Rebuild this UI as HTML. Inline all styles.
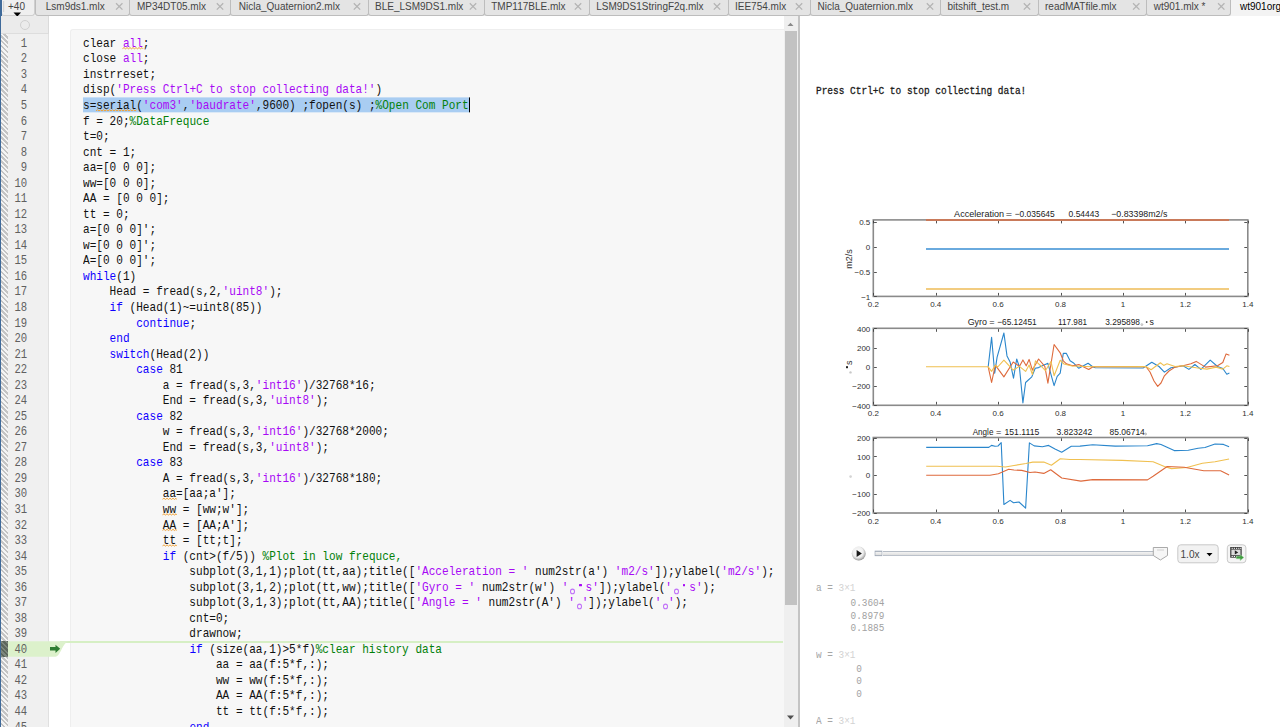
<!DOCTYPE html>
<html><head><meta charset="utf-8">
<style>
*{margin:0;padding:0;box-sizing:border-box}
html,body{width:1280px;height:727px;overflow:hidden;background:#fff;position:relative;font-family:"Liberation Sans",sans-serif}
#tabbar{position:absolute;left:0;top:0;width:1280px;height:16px;background:#f3f3f3}
.tab{position:absolute;top:-2px;height:18px;background:#e4e4e4;border:1px solid #bdbdbd;border-top:none;border-radius:0 0 3px 3px}
.tab.plus{background:#efefef;border-color:#cfcfcf}
.tt{position:absolute;top:1px;font-size:10px;line-height:12px;color:#444;white-space:nowrap}
#leftstrip{position:absolute;left:0;top:0;width:1.5px;height:727px;background:#3f6a9a}
#gutter{position:absolute;left:1px;top:16px;width:48px;height:711px;background:#f0f0f0;border-right:1px solid #e0e0e0}
#guttop{position:absolute;left:1px;top:16px;width:48px;height:18px;background:#ebebeb;border-bottom:1px solid #dddddd;border-right:1px solid #dadada}
#circ{position:absolute;left:20px;top:19.5px;width:10px;height:10px;border:1px solid #d0d0d0;border-radius:50%}
#hatch{position:absolute;left:1px;top:34px;width:7px;height:693px;background:repeating-linear-gradient(45deg,#f4f4f4 0 1.6px,#c4c4c4 1.6px 3.4px)}
.gn{position:absolute;left:-0.8px;width:28px;text-align:right;font-family:"Liberation Mono",monospace;font-size:10.6px;color:#606060;height:15.54px;line-height:15.54px;transform:translateY(-0.2px) scaleY(1.22);transform-origin:0 10.6px}
#editor{position:absolute;left:49px;top:16px;width:735px;height:711px;background:#fff}
#cell{position:absolute;left:70px;top:29px;width:714px;height:698px;background:#f7f7f7;border-top:1px solid #eeeeee;border-left:1px solid #eeeeee;border-radius:3px 0 0 0}
.ln{position:absolute;left:83px;white-space:pre;font-family:"Liberation Mono",monospace;font-size:11.092px;height:15.540px;line-height:15.540px;color:#111;transform:scaleY(1.15);transform-origin:0 10.7px}
.k{color:#0e00ff}
.s{color:#a709f5}
.c{color:#028009}
.w{text-decoration:underline wavy #e8a040;text-decoration-thickness:1px;text-underline-offset:1.5px}
.sel{background:#a9cdf2;box-shadow:0 -1px 0 #a9cdf2}
.jc{display:inline-block;width:6.655px;height:10px;position:relative}
.jc::after{content:"";position:absolute;left:2px;top:7.5px;width:3px;height:3px;border:0.9px solid #c070f8;border-radius:50%}
.jd{display:inline-block;width:10.6px;height:10px;position:relative}
.jd::after{content:"";position:absolute;left:4.5px;top:4px;width:2.2px;height:2.2px;background:#a709f5;border-radius:0.5px}
.caret{display:inline-block;width:1px;height:13px;background:#000;vertical-align:-3px}
#scroll{position:absolute;left:784px;top:16px;width:14px;height:711px;background:#efefef}
#thumb{position:absolute;left:785px;top:31px;width:12px;height:574px;background:#c2c2c2}
#divider{position:absolute;left:798px;top:16px;width:1.5px;height:711px;background:#c4c4c4}
#out{position:absolute;left:800px;top:16px;width:480px;height:711px;background:#fff}
.mono{position:absolute;font-family:"Liberation Mono",monospace;white-space:pre}
svg{position:absolute;left:0;top:0}
.tl{font-family:"Liberation Sans",sans-serif;font-size:8px;fill:#303030}
.tit{font-family:"Liberation Sans",sans-serif;font-size:9px;fill:#1a1a1a}
#l40bar{position:absolute;left:1px;top:641.3px;width:7px;height:15.5px;background:repeating-linear-gradient(45deg,#7d877d 0 1.6px,#5c665c 1.6px 3.4px)}
#l40line{position:absolute;left:60px;top:641.3px;width:723px;height:1.6px;background:#d6efc4}
.vn{position:absolute;font-family:"Liberation Mono",monospace;font-size:9.4px;line-height:12.4px;color:#a2a2a2;white-space:pre;transform:scaleY(1.12);transform-origin:0 9px}
.vh{position:absolute;font-family:"Liberation Mono",monospace;font-size:9.4px;line-height:12px;color:#a6a6a6;white-space:pre;transform:scaleY(1.12);transform-origin:0 9px}
.vh span{color:#d2d2d2}
</style></head><body>
<div id="tabbar"></div>
<div class="tab plus" style="left:1px;width:34px"></div>
<div class="tab" style="left:35px;width:95px"></div>
<div class="tt" style="left:45.75px">Lsm9ds1.mlx</div>
<div class="tab" style="left:129px;width:101.5px"></div>
<div class="tt" style="left:137px">MP34DT05.mlx</div>
<div class="tab" style="left:229.5px;width:139.0px"></div>
<div class="tt" style="left:238.75px">Nicla_Quaternion2.mlx</div>
<div class="tab" style="left:367.5px;width:117.5px"></div>
<div class="tt" style="left:375px">BLE_LSM9DS1.mlx</div>
<div class="tab" style="left:484px;width:106px"></div>
<div class="tt" style="left:491.25px">TMP117BLE.mlx</div>
<div class="tab" style="left:589px;width:139.5px"></div>
<div class="tt" style="left:596.25px">LSM9DS1StringF2q.mlx</div>
<div class="tab" style="left:727.5px;width:83.0px"></div>
<div class="tt" style="left:735px">IEE754.mlx</div>
<div class="tab" style="left:809.5px;width:131.5px"></div>
<div class="tt" style="left:817.5px">Nicla_Quaternion.mlx</div>
<div class="tab" style="left:940px;width:98.5px"></div>
<div class="tt" style="left:947.5px">bitshift_test.m</div>
<div class="tab" style="left:1037.5px;width:109.5px"></div>
<div class="tt" style="left:1045px">readMATfile.mlx</div>
<div class="tab" style="left:1146px;width:84.5px"></div>
<div class="tt" style="left:1153.75px">wt901.mlx *</div>
<div class="tt" style="left:8px">+40</div>
<div class="tt" style="left:1240px;color:#000">wt901org.mlx</div>
<svg width="1280" height="16" style="position:absolute;left:0;top:0"><path d="M116.05,3.2 L122.45,9.6 M122.45,3.2 L116.05,9.6" stroke="#b4b4b4" stroke-width="1.3"/><path d="M216.8,3.2 L223.2,9.6 M223.2,3.2 L216.8,9.6" stroke="#b4b4b4" stroke-width="1.3"/><path d="M353.8,3.2 L360.2,9.6 M360.2,3.2 L353.8,9.6" stroke="#b4b4b4" stroke-width="1.3"/><path d="M469.8,3.2 L476.2,9.6 M476.2,3.2 L469.8,9.6" stroke="#b4b4b4" stroke-width="1.3"/><path d="M574.8,3.2 L581.2,9.6 M581.2,3.2 L574.8,9.6" stroke="#b4b4b4" stroke-width="1.3"/><path d="M713.8,3.2 L720.2,9.6 M720.2,3.2 L713.8,9.6" stroke="#b4b4b4" stroke-width="1.3"/><path d="M795.8,3.2 L802.2,9.6 M802.2,3.2 L795.8,9.6" stroke="#b4b4b4" stroke-width="1.3"/><path d="M926.8,3.2 L933.2,9.6 M933.2,3.2 L926.8,9.6" stroke="#b4b4b4" stroke-width="1.3"/><path d="M1023.8,3.2 L1030.2,9.6 M1030.2,3.2 L1023.8,9.6" stroke="#b4b4b4" stroke-width="1.3"/><path d="M1133.05,3.2 L1139.45,9.6 M1139.45,3.2 L1133.05,9.6" stroke="#b4b4b4" stroke-width="1.3"/><path d="M1218.05,3.2 L1224.45,9.6 M1224.45,3.2 L1218.05,9.6" stroke="#b4b4b4" stroke-width="1.3"/><path d="M13.5,12.5 L21,12.5 L17.25,16.5 Z" fill="#000"/><rect x="3" y="1" width="1.2" height="11" fill="#d4d4d4"/></svg>
<div id="leftstrip"></div>
<div id="gutter"></div>
<div id="guttop"></div>
<div id="circ"></div>
<div id="hatch"></div>
<div id="editor"></div>
<div id="cell"></div>
<div id="l40bar"></div>
<div id="l40line"></div>
<svg width="80" height="727" style="position:absolute;left:0;top:0">
<path d="M8,641.3 L69,641.3 C64,642 62,650 59,654 C58,656 56,656.8 54,656.8 L8,656.8 Z" fill="#dcf1cb"/>
<path d="M50,647 L55.5,647 L55.5,644.7 L60.2,648.8 L55.5,652.9 L55.5,650.6 L50,650.6 Z" fill="#2f7d32"/>
</svg>
<div class="gn" style="top:36.80px">1</div>
<div class="gn" style="top:52.34px">2</div>
<div class="gn" style="top:67.88px">3</div>
<div class="gn" style="top:83.42px">4</div>
<div class="gn" style="top:98.96px">5</div>
<div class="gn" style="top:114.50px">6</div>
<div class="gn" style="top:130.04px">7</div>
<div class="gn" style="top:145.58px">8</div>
<div class="gn" style="top:161.12px">9</div>
<div class="gn" style="top:176.66px">10</div>
<div class="gn" style="top:192.20px">11</div>
<div class="gn" style="top:207.74px">12</div>
<div class="gn" style="top:223.28px">13</div>
<div class="gn" style="top:238.82px">14</div>
<div class="gn" style="top:254.36px">15</div>
<div class="gn" style="top:269.90px">16</div>
<div class="gn" style="top:285.44px">17</div>
<div class="gn" style="top:300.98px">18</div>
<div class="gn" style="top:316.52px">19</div>
<div class="gn" style="top:332.06px">20</div>
<div class="gn" style="top:347.60px">21</div>
<div class="gn" style="top:363.14px">22</div>
<div class="gn" style="top:378.68px">23</div>
<div class="gn" style="top:394.22px">24</div>
<div class="gn" style="top:409.76px">25</div>
<div class="gn" style="top:425.30px">26</div>
<div class="gn" style="top:440.84px">27</div>
<div class="gn" style="top:456.38px">28</div>
<div class="gn" style="top:471.92px">29</div>
<div class="gn" style="top:487.46px">30</div>
<div class="gn" style="top:503.00px">31</div>
<div class="gn" style="top:518.54px">32</div>
<div class="gn" style="top:534.08px">33</div>
<div class="gn" style="top:549.62px">34</div>
<div class="gn" style="top:565.16px">35</div>
<div class="gn" style="top:580.70px">36</div>
<div class="gn" style="top:596.24px">37</div>
<div class="gn" style="top:611.78px">38</div>
<div class="gn" style="top:627.32px">39</div>
<div class="gn" style="top:642.86px">40</div>
<div class="gn" style="top:658.40px">41</div>
<div class="gn" style="top:673.94px">42</div>
<div class="gn" style="top:689.48px">43</div>
<div class="gn" style="top:705.02px">44</div>
<div class="gn" style="top:720.56px">45</div>
<div class="ln" style="top:36.80px">clear <span class="s">all</span>;</div>
<div class="ln" style="top:52.34px">close <span class="s">all</span>;</div>
<div class="ln" style="top:67.88px">instrreset;</div>
<div class="ln" style="top:83.42px">disp(<span class="s">&#x27;Press Ctrl+C to stop collecting data!&#x27;</span>)</div>
<div class="ln" style="top:98.96px"><span class="sel">s=serial(<span class="s">&#x27;com3&#x27;</span>,<span class="s">&#x27;baudrate&#x27;</span>,9600) ;fopen(s) ;<span class="c">%Open Com Port</span></span><span class="caret"></span></div>
<div class="ln" style="top:114.50px">f = 20;<span class="c">%DataFrequce</span></div>
<div class="ln" style="top:130.04px">t=0;</div>
<div class="ln" style="top:145.58px">cnt = 1;</div>
<div class="ln" style="top:161.12px">aa=[0 0 0];</div>
<div class="ln" style="top:176.66px">ww=[0 0 0];</div>
<div class="ln" style="top:192.20px">AA = [0 0 0];</div>
<div class="ln" style="top:207.74px">tt = 0;</div>
<div class="ln" style="top:223.28px">a=[0 0 0]&#x27;;</div>
<div class="ln" style="top:238.82px">w=[0 0 0]&#x27;;</div>
<div class="ln" style="top:254.36px">A=[0 0 0]&#x27;;</div>
<div class="ln" style="top:269.90px"><span class="k">while</span>(1)</div>
<div class="ln" style="top:285.44px">    Head = fread(s,2,<span class="s">&#x27;uint8&#x27;</span>);</div>
<div class="ln" style="top:300.98px">    <span class="k">if</span> (Head(1)~=uint8(85))</div>
<div class="ln" style="top:316.52px">        <span class="k">continue</span>;</div>
<div class="ln" style="top:332.06px">    <span class="k">end</span></div>
<div class="ln" style="top:347.60px">    <span class="k">switch</span>(Head(2))</div>
<div class="ln" style="top:363.14px">        <span class="k">case</span> 81</div>
<div class="ln" style="top:378.68px">            a = fread(s,3,<span class="s">&#x27;int16&#x27;</span>)/32768*16;</div>
<div class="ln" style="top:394.22px">            End = fread(s,3,<span class="s">&#x27;uint8&#x27;</span>);</div>
<div class="ln" style="top:409.76px">        <span class="k">case</span> 82</div>
<div class="ln" style="top:425.30px">            w = fread(s,3,<span class="s">&#x27;int16&#x27;</span>)/32768*2000;</div>
<div class="ln" style="top:440.84px">            End = fread(s,3,<span class="s">&#x27;uint8&#x27;</span>);</div>
<div class="ln" style="top:456.38px">        <span class="k">case</span> 83</div>
<div class="ln" style="top:471.92px">            A = fread(s,3,<span class="s">&#x27;int16&#x27;</span>)/32768*180;</div>
<div class="ln" style="top:487.46px">            aa=[aa;a&#x27;];</div>
<div class="ln" style="top:503.00px">            ww = [ww;w&#x27;];</div>
<div class="ln" style="top:518.54px">            AA = [AA;A&#x27;];</div>
<div class="ln" style="top:534.08px">            tt = [tt;t];</div>
<div class="ln" style="top:549.62px">            <span class="k">if</span> (cnt&gt;(f/5)) <span class="c">%Plot in low frequce,</span></div>
<div class="ln" style="top:565.16px">                subplot(3,1,1);plot(tt,aa);title([<span class="s">&#x27;Acceleration = &#x27;</span> num2str(a&#x27;) <span class="s">&#x27;m2/s&#x27;</span>]);ylabel(<span class="s">&#x27;m2/s&#x27;</span>);</div>
<div class="ln" style="top:580.70px">                subplot(3,1,2);plot(tt,ww);title([<span class="s">&#x27;Gyro = &#x27;</span> num2str(w&#x27;) <span class="s">'<span class="jc"></span><span class="jd"></span>s'</span>]);ylabel(<span class="s">'<span class="jc"></span><span class="jd"></span>s'</span>);</div>
<div class="ln" style="top:596.24px">                subplot(3,1,3);plot(tt,AA);title([<span class="s">&#x27;Angle = &#x27;</span> num2str(A&#x27;) <span class="s">'<span class="jc"></span>'</span>]);ylabel(<span class="s">'<span class="jc"></span>'</span>);</div>
<div class="ln" style="top:611.78px">                cnt=0;</div>
<div class="ln" style="top:627.32px">                drawnow;</div>
<div class="ln" style="top:642.86px">                <span class="k">if</span> (size(aa,1)&gt;5*f)<span class="c">%clear history data</span></div>
<div class="ln" style="top:658.40px">                    aa = aa(f:5*f,:);</div>
<div class="ln" style="top:673.94px">                    ww = ww(f:5*f,:);</div>
<div class="ln" style="top:689.48px">                    AA = AA(f:5*f,:);</div>
<div class="ln" style="top:705.02px">                    tt = tt(f:5*f,:);</div>
<div class="ln" style="top:720.56px">                <span class="k">end</span></div>
<div id="scroll"></div>
<div id="thumb"></div>
<svg width="20" height="727" style="position:absolute;left:780px;top:0">
<path d="M7.5,26 L13.5,26 L10.5,22.8 Z" fill="#8a8a8a"/>
<path d="M7,715.5 L14,715.5 L10.5,719.5 Z" fill="#505050"/>
</svg>
<div id="divider"></div>
<div id="out"></div>
<div class="mono" style="left:816px;top:86.3px;font-size:9.47px;line-height:12px;color:#1a1a1a;transform:scaleY(1.15);transform-origin:0 9px;-webkit-text-stroke:0.25px #1a1a1a">Press Ctrl+C to stop collecting data!</div>
<svg width="1280" height="727" viewBox="0 0 1280 727">
<rect x="873.3" y="219.9" width="374.5" height="76.5" fill="#fff" stroke="#8a8a8a" stroke-width="1.6"/>
<line x1="873.5" y1="295.59999999999997" x2="873.5" y2="292.9" stroke="#404040" stroke-width="0.9"/>
<line x1="873.5" y1="220.70000000000002" x2="873.5" y2="223.4" stroke="#404040" stroke-width="0.9"/>
<text x="873.3" y="307.2" class="tl" text-anchor="middle">0.2</text>
<line x1="936.5" y1="295.59999999999997" x2="936.5" y2="292.9" stroke="#404040" stroke-width="0.9"/>
<line x1="936.5" y1="220.70000000000002" x2="936.5" y2="223.4" stroke="#404040" stroke-width="0.9"/>
<text x="935.7" y="307.2" class="tl" text-anchor="middle">0.4</text>
<line x1="998.5" y1="295.59999999999997" x2="998.5" y2="292.9" stroke="#404040" stroke-width="0.9"/>
<line x1="998.5" y1="220.70000000000002" x2="998.5" y2="223.4" stroke="#404040" stroke-width="0.9"/>
<text x="998.1" y="307.2" class="tl" text-anchor="middle">0.6</text>
<line x1="1061.5" y1="295.59999999999997" x2="1061.5" y2="292.9" stroke="#404040" stroke-width="0.9"/>
<line x1="1061.5" y1="220.70000000000002" x2="1061.5" y2="223.4" stroke="#404040" stroke-width="0.9"/>
<text x="1060.5" y="307.2" class="tl" text-anchor="middle">0.8</text>
<line x1="1123.5" y1="295.59999999999997" x2="1123.5" y2="292.9" stroke="#404040" stroke-width="0.9"/>
<line x1="1123.5" y1="220.70000000000002" x2="1123.5" y2="223.4" stroke="#404040" stroke-width="0.9"/>
<text x="1123.0" y="307.2" class="tl" text-anchor="middle">1</text>
<line x1="1185.5" y1="295.59999999999997" x2="1185.5" y2="292.9" stroke="#404040" stroke-width="0.9"/>
<line x1="1185.5" y1="220.70000000000002" x2="1185.5" y2="223.4" stroke="#404040" stroke-width="0.9"/>
<text x="1185.4" y="307.2" class="tl" text-anchor="middle">1.2</text>
<line x1="1248.5" y1="295.59999999999997" x2="1248.5" y2="292.9" stroke="#404040" stroke-width="0.9"/>
<line x1="1248.5" y1="220.70000000000002" x2="1248.5" y2="223.4" stroke="#404040" stroke-width="0.9"/>
<text x="1247.8" y="307.2" class="tl" text-anchor="middle">1.4</text>
<line x1="874.0999999999999" y1="222.5" x2="876.8" y2="222.5" stroke="#404040" stroke-width="0.9"/>
<line x1="1247.0" y1="222.5" x2="1244.3" y2="222.5" stroke="#404040" stroke-width="0.9"/>
<text x="870.3" y="224.79999999999998" class="tl" text-anchor="end">0.5</text>
<line x1="874.0999999999999" y1="247.5" x2="876.8" y2="247.5" stroke="#404040" stroke-width="0.9"/>
<line x1="1247.0" y1="247.5" x2="1244.3" y2="247.5" stroke="#404040" stroke-width="0.9"/>
<text x="870.3" y="250.1" class="tl" text-anchor="end">0</text>
<line x1="874.0999999999999" y1="272.5" x2="876.8" y2="272.5" stroke="#404040" stroke-width="0.9"/>
<line x1="1247.0" y1="272.5" x2="1244.3" y2="272.5" stroke="#404040" stroke-width="0.9"/>
<text x="870.3" y="275.09999999999997" class="tl" text-anchor="end">&#x2212;0.5</text>
<line x1="874.0999999999999" y1="296.5" x2="876.8" y2="296.5" stroke="#404040" stroke-width="0.9"/>
<line x1="1247.0" y1="296.5" x2="1244.3" y2="296.5" stroke="#404040" stroke-width="0.9"/>
<text x="870.3" y="299.59999999999997" class="tl" text-anchor="end">&#x2212;1</text>
<text x="954.1" y="216.6" class="tit" textLength="50.0" lengthAdjust="spacingAndGlyphs">Acceleration</text>
<text x="1005.7" y="216.6" class="tit" textLength="6.3" lengthAdjust="spacingAndGlyphs">=</text>
<text x="1014.7" y="216.6" class="tit" textLength="40.0" lengthAdjust="spacingAndGlyphs">&#x2212;0.035645</text>
<text x="1068.6" y="216.6" class="tit" textLength="30.6" lengthAdjust="spacingAndGlyphs">0.54443</text>
<text x="1111.2" y="216.6" class="tit" textLength="56.2" lengthAdjust="spacingAndGlyphs">&#x2212;0.83398m2/s</text>
<text x="0" y="0" class="tl" style="font-size:9px" text-anchor="middle" transform="translate(852 259) rotate(-90)">m2/s</text>
<line x1="926" y1="220" x2="1229" y2="220" stroke="#c97a5a" stroke-width="1.8"/>
<line x1="926" y1="249" x2="1229" y2="249" stroke="#6aaade" stroke-width="1.8"/>
<line x1="926" y1="289" x2="1229" y2="289" stroke="#f2cc80" stroke-width="1.8"/>
<rect x="873.3" y="328.3" width="374.5" height="77.0" fill="#fff" stroke="#8a8a8a" stroke-width="1.6"/>
<line x1="873.5" y1="404.5" x2="873.5" y2="401.8" stroke="#404040" stroke-width="0.9"/>
<line x1="873.5" y1="329.1" x2="873.5" y2="331.8" stroke="#404040" stroke-width="0.9"/>
<text x="873.3" y="416.1" class="tl" text-anchor="middle">0.2</text>
<line x1="936.5" y1="404.5" x2="936.5" y2="401.8" stroke="#404040" stroke-width="0.9"/>
<line x1="936.5" y1="329.1" x2="936.5" y2="331.8" stroke="#404040" stroke-width="0.9"/>
<text x="935.7" y="416.1" class="tl" text-anchor="middle">0.4</text>
<line x1="998.5" y1="404.5" x2="998.5" y2="401.8" stroke="#404040" stroke-width="0.9"/>
<line x1="998.5" y1="329.1" x2="998.5" y2="331.8" stroke="#404040" stroke-width="0.9"/>
<text x="998.1" y="416.1" class="tl" text-anchor="middle">0.6</text>
<line x1="1061.5" y1="404.5" x2="1061.5" y2="401.8" stroke="#404040" stroke-width="0.9"/>
<line x1="1061.5" y1="329.1" x2="1061.5" y2="331.8" stroke="#404040" stroke-width="0.9"/>
<text x="1060.5" y="416.1" class="tl" text-anchor="middle">0.8</text>
<line x1="1123.5" y1="404.5" x2="1123.5" y2="401.8" stroke="#404040" stroke-width="0.9"/>
<line x1="1123.5" y1="329.1" x2="1123.5" y2="331.8" stroke="#404040" stroke-width="0.9"/>
<text x="1123.0" y="416.1" class="tl" text-anchor="middle">1</text>
<line x1="1185.5" y1="404.5" x2="1185.5" y2="401.8" stroke="#404040" stroke-width="0.9"/>
<line x1="1185.5" y1="329.1" x2="1185.5" y2="331.8" stroke="#404040" stroke-width="0.9"/>
<text x="1185.4" y="416.1" class="tl" text-anchor="middle">1.2</text>
<line x1="1248.5" y1="404.5" x2="1248.5" y2="401.8" stroke="#404040" stroke-width="0.9"/>
<line x1="1248.5" y1="329.1" x2="1248.5" y2="331.8" stroke="#404040" stroke-width="0.9"/>
<text x="1247.8" y="416.1" class="tl" text-anchor="middle">1.4</text>
<line x1="874.0999999999999" y1="328.5" x2="876.8" y2="328.5" stroke="#404040" stroke-width="0.9"/>
<line x1="1247.0" y1="328.5" x2="1244.3" y2="328.5" stroke="#404040" stroke-width="0.9"/>
<text x="870.3" y="331.5" class="tl" text-anchor="end">400</text>
<line x1="874.0999999999999" y1="348.5" x2="876.8" y2="348.5" stroke="#404040" stroke-width="0.9"/>
<line x1="1247.0" y1="348.5" x2="1244.3" y2="348.5" stroke="#404040" stroke-width="0.9"/>
<text x="870.3" y="350.75" class="tl" text-anchor="end">200</text>
<line x1="874.0999999999999" y1="367.5" x2="876.8" y2="367.5" stroke="#404040" stroke-width="0.9"/>
<line x1="1247.0" y1="367.5" x2="1244.3" y2="367.5" stroke="#404040" stroke-width="0.9"/>
<text x="870.3" y="370.0" class="tl" text-anchor="end">0</text>
<line x1="874.0999999999999" y1="386.5" x2="876.8" y2="386.5" stroke="#404040" stroke-width="0.9"/>
<line x1="1247.0" y1="386.5" x2="1244.3" y2="386.5" stroke="#404040" stroke-width="0.9"/>
<text x="870.3" y="389.25" class="tl" text-anchor="end">&#x2212;200</text>
<line x1="874.0999999999999" y1="405.5" x2="876.8" y2="405.5" stroke="#404040" stroke-width="0.9"/>
<line x1="1247.0" y1="405.5" x2="1244.3" y2="405.5" stroke="#404040" stroke-width="0.9"/>
<text x="870.3" y="408.5" class="tl" text-anchor="end">&#x2212;400</text>
<text x="967.7" y="325.1" class="tit" textLength="19.3" lengthAdjust="spacingAndGlyphs">Gyro</text>
<text x="989.2" y="325.1" class="tit" textLength="5.3" lengthAdjust="spacingAndGlyphs">=</text>
<text x="997.2" y="325.1" class="tit" textLength="39.5" lengthAdjust="spacingAndGlyphs">&#x2212;65.12451</text>
<text x="1058.1" y="325.1" class="tit" textLength="28.9" lengthAdjust="spacingAndGlyphs">117.981</text>
<text x="1105.2" y="325.1" class="tit" textLength="34.8" lengthAdjust="spacingAndGlyphs">3.295898</text>
<text x="1149.5" y="325.1" class="tit" textLength="4.4" lengthAdjust="spacingAndGlyphs">s</text>
<text x="0" y="0" class="tl" style="font-size:9px" text-anchor="middle" transform="translate(852 362.7) rotate(-90)">s</text>
<polyline points="988.2,366.8 991.6,337.3 994.7,373.2 997.1,357.1 1003.9,333.0 1007.0,355.9 1010.1,362.0 1013.5,378.2 1016.7,359.0 1019.4,367.0 1022.9,402.9 1025.6,382.5 1031.8,376.9 1035.2,368.3 1038.6,367.6 1047.9,363.3 1054.1,385.6 1057.2,376.3 1060.2,373.2 1063.3,353.4 1066.4,353.4 1070.1,360.8 1073.2,362.7 1078.8,368.3 1088.1,363.3 1093.0,367.0 1095.3,367.8 1143.1,368.0 1151.8,362.2 1159.0,366.5 1164.4,372.1 1171.0,367.8 1183.0,365.8 1188.9,369.4 1194.9,364.5 1200.9,369.4 1210.2,360.1 1217.5,366.5 1222.8,368.5 1226.8,374.2 1229.4,373.1" fill="none" stroke="#2a86cc" stroke-width="1.1" stroke-linejoin="round"/>
<polyline points="988.2,366.8 991.6,382.5 995.3,365.2 1003.9,376.9 1013.2,362.0 1019.4,366.4 1022.9,359.9 1026.2,365.8 1029.1,359.4 1032.4,370.1 1038.6,359.0 1044.8,366.4 1047.9,383.1 1054.1,344.5 1060.2,352.8 1063.3,360.8 1066.4,363.9 1072.6,365.8 1078.8,364.6 1088.7,369.5 1093.0,366.8 1145.8,366.5 1150.0,372.0 1154.0,381.0 1157.7,386.4 1161.0,383.0 1164.4,375.8 1169.0,371.0 1175.0,367.1 1183.0,365.8 1190.9,363.8 1196.2,361.4 1205.5,367.1 1217.5,365.8 1222.8,362.5 1226.1,353.9 1229.4,355.2" fill="none" stroke="#de6a3c" stroke-width="1.1" stroke-linejoin="round"/>
<polyline points="926.0,366.8 988.2,366.8 991.6,371.4 995.3,365.2 997.7,367.0 1003.9,360.2 1013.2,370.1 1019.4,366.4 1025.6,371.4 1029.1,365.0 1032.4,374.5 1035.5,360.8 1042.0,367.0 1045.4,370.7 1051.0,361.5 1054.1,375.7 1060.2,360.2 1064.0,364.0 1072.0,366.0 1093.0,366.8 1145.8,366.5 1151.1,369.8 1160.4,362.8 1163.7,365.4 1167.0,363.8 1175.0,366.5 1183.0,365.8 1196.2,367.8 1206.9,369.1 1216.2,367.1 1222.8,369.1 1226.8,365.8 1229.4,366.5" fill="none" stroke="#f0c050" stroke-width="1.1" stroke-linejoin="round"/>
<circle cx="1141.9" cy="324.6" r="0.9" fill="none" stroke="#999" stroke-width="0.7"/><rect x="1145.9" y="321.3" width="1.5" height="1.5" fill="#222"/>
<rect x="873.3" y="437.5" width="374.5" height="75.5" fill="#fff" stroke="#8a8a8a" stroke-width="1.6"/>
<line x1="873.5" y1="512.2" x2="873.5" y2="509.5" stroke="#404040" stroke-width="0.9"/>
<line x1="873.5" y1="438.3" x2="873.5" y2="441.0" stroke="#404040" stroke-width="0.9"/>
<text x="873.3" y="523.8" class="tl" text-anchor="middle">0.2</text>
<line x1="936.5" y1="512.2" x2="936.5" y2="509.5" stroke="#404040" stroke-width="0.9"/>
<line x1="936.5" y1="438.3" x2="936.5" y2="441.0" stroke="#404040" stroke-width="0.9"/>
<text x="935.7" y="523.8" class="tl" text-anchor="middle">0.4</text>
<line x1="998.5" y1="512.2" x2="998.5" y2="509.5" stroke="#404040" stroke-width="0.9"/>
<line x1="998.5" y1="438.3" x2="998.5" y2="441.0" stroke="#404040" stroke-width="0.9"/>
<text x="998.1" y="523.8" class="tl" text-anchor="middle">0.6</text>
<line x1="1061.5" y1="512.2" x2="1061.5" y2="509.5" stroke="#404040" stroke-width="0.9"/>
<line x1="1061.5" y1="438.3" x2="1061.5" y2="441.0" stroke="#404040" stroke-width="0.9"/>
<text x="1060.5" y="523.8" class="tl" text-anchor="middle">0.8</text>
<line x1="1123.5" y1="512.2" x2="1123.5" y2="509.5" stroke="#404040" stroke-width="0.9"/>
<line x1="1123.5" y1="438.3" x2="1123.5" y2="441.0" stroke="#404040" stroke-width="0.9"/>
<text x="1123.0" y="523.8" class="tl" text-anchor="middle">1</text>
<line x1="1185.5" y1="512.2" x2="1185.5" y2="509.5" stroke="#404040" stroke-width="0.9"/>
<line x1="1185.5" y1="438.3" x2="1185.5" y2="441.0" stroke="#404040" stroke-width="0.9"/>
<text x="1185.4" y="523.8" class="tl" text-anchor="middle">1.2</text>
<line x1="1248.5" y1="512.2" x2="1248.5" y2="509.5" stroke="#404040" stroke-width="0.9"/>
<line x1="1248.5" y1="438.3" x2="1248.5" y2="441.0" stroke="#404040" stroke-width="0.9"/>
<text x="1247.8" y="523.8" class="tl" text-anchor="middle">1.4</text>
<line x1="874.0999999999999" y1="438.5" x2="876.8" y2="438.5" stroke="#404040" stroke-width="0.9"/>
<line x1="1247.0" y1="438.5" x2="1244.3" y2="438.5" stroke="#404040" stroke-width="0.9"/>
<text x="870.3" y="440.7" class="tl" text-anchor="end">200</text>
<line x1="874.0999999999999" y1="456.5" x2="876.8" y2="456.5" stroke="#404040" stroke-width="0.9"/>
<line x1="1247.0" y1="456.5" x2="1244.3" y2="456.5" stroke="#404040" stroke-width="0.9"/>
<text x="870.3" y="459.575" class="tl" text-anchor="end">100</text>
<line x1="874.0999999999999" y1="475.5" x2="876.8" y2="475.5" stroke="#404040" stroke-width="0.9"/>
<line x1="1247.0" y1="475.5" x2="1244.3" y2="475.5" stroke="#404040" stroke-width="0.9"/>
<text x="870.3" y="478.45" class="tl" text-anchor="end">0</text>
<line x1="874.0999999999999" y1="494.5" x2="876.8" y2="494.5" stroke="#404040" stroke-width="0.9"/>
<line x1="1247.0" y1="494.5" x2="1244.3" y2="494.5" stroke="#404040" stroke-width="0.9"/>
<text x="870.3" y="497.325" class="tl" text-anchor="end">&#x2212;100</text>
<line x1="874.0999999999999" y1="513.5" x2="876.8" y2="513.5" stroke="#404040" stroke-width="0.9"/>
<line x1="1247.0" y1="513.5" x2="1244.3" y2="513.5" stroke="#404040" stroke-width="0.9"/>
<text x="870.3" y="516.2" class="tl" text-anchor="end">&#x2212;200</text>
<text x="972.7" y="434.6" class="tit" textLength="20.7" lengthAdjust="spacingAndGlyphs">Angle</text>
<text x="996.1" y="434.6" class="tit" textLength="5.3" lengthAdjust="spacingAndGlyphs">=</text>
<text x="1004.5" y="434.6" class="tit" textLength="34.8" lengthAdjust="spacingAndGlyphs">151.1115</text>
<text x="1056.6" y="434.6" class="tit" textLength="35.7" lengthAdjust="spacingAndGlyphs">3.823242</text>
<text x="1109.5" y="434.6" class="tit" textLength="35.3" lengthAdjust="spacingAndGlyphs">85.06714</text>
<polyline points="926.2,447.4 988.8,447.4 991.5,445.4 995.0,446.3 998.0,446.0 1001.2,442.6 1003.9,504.5 1010.1,500.4 1013.5,502.7 1019.0,502.0 1025.6,508.2 1029.4,442.9 1034.2,445.9 1042.4,446.7 1048.6,445.4 1055.0,449.0 1061.7,452.2 1071.3,446.3 1080.0,446.1 1092.7,444.7 1115.2,446.1 1147.5,445.8 1156.7,443.6 1161.0,444.5 1174.2,450.6 1188.3,450.3 1198.1,448.2 1205.0,447.5 1215.0,444.0 1223.5,444.4 1229.1,446.8" fill="none" stroke="#2a86cc" stroke-width="1.1" stroke-linejoin="round"/>
<polyline points="926.2,466.3 997.0,466.3 1005.3,467.0 1014.0,465.5 1025.9,463.5 1032.8,462.1 1043.8,462.1 1051.4,465.2 1060.3,458.7 1070.0,459.5 1080.0,459.5 1122.2,460.4 1153.1,461.8 1164.4,466.5 1171.4,468.6 1186.9,467.5 1202.4,463.3 1215.0,461.8 1229.1,459.0" fill="none" stroke="#f0c050" stroke-width="1.1" stroke-linejoin="round"/>
<polyline points="926.2,475.2 990.0,475.2 998.4,473.8 1008.7,469.3 1014.0,470.0 1021.8,470.4 1030.0,472.5 1035.0,472.0 1043.8,473.4 1050.7,469.7 1061.7,478.0 1080.9,481.1 1092.7,479.6 1147.5,479.9 1153.1,476.3 1167.2,466.5 1184.1,467.2 1203.8,470.7 1220.6,470.7 1229.1,474.9" fill="none" stroke="#de6a3c" stroke-width="1.1" stroke-linejoin="round"/>
<rect x="846" y="366.2" width="2" height="2" fill="#222"/><circle cx="850.5" cy="372.4" r="1.2" fill="#c8c8c8"/><circle cx="850.6" cy="476.6" r="1.3" fill="#d4d4d4"/>
<circle cx="1145.6" cy="434" r="0.9" fill="none" stroke="#999" stroke-width="0.7"/>
<path d="M122.5,48.6 L124.00,47.6 L125.50,48.800000000000004 L127.00,47.6 L128.50,48.800000000000004 L130.00,47.6 L131.50,48.800000000000004 L133.00,47.6 L134.50,48.800000000000004 L136.00,47.6 L137.50,48.800000000000004 L139.00,47.6 L140.50,48.800000000000004 L142.00,47.6 L143.00,48.800000000000004" fill="none" stroke="#f0a238" stroke-width="1"/>
<path d="M96,110.75999999999999 L97.50,109.75999999999999 L99.00,110.96 L100.50,109.75999999999999 L102.00,110.96 L103.50,109.75999999999999 L105.00,110.96 L106.50,109.75999999999999 L108.00,110.96 L109.50,109.75999999999999 L111.00,110.96 L112.50,109.75999999999999 L114.00,110.96 L115.50,109.75999999999999 L117.00,110.96 L118.50,109.75999999999999 L120.00,110.96 L121.50,109.75999999999999 L123.00,110.96 L124.50,109.75999999999999 L126.00,110.96 L127.50,109.75999999999999 L129.00,110.96 L130.50,109.75999999999999 L132.00,110.96 L133.50,109.75999999999999 L135.00,110.96 L136.50,109.75999999999999" fill="none" stroke="#f0a238" stroke-width="1"/>
<path d="M162.5,499.26 L164.00,498.26 L165.50,499.46 L167.00,498.26 L168.50,499.46 L170.00,498.26 L171.50,499.46 L173.00,498.26 L174.50,499.46 L176.00,498.26 L176.50,499.46" fill="none" stroke="#f0a238" stroke-width="1"/>
<path d="M162.5,514.8 L164.00,513.8 L165.50,515.0 L167.00,513.8 L168.50,515.0 L170.00,513.8 L171.50,515.0 L173.00,513.8 L174.50,515.0 L176.00,513.8 L176.50,515.0" fill="none" stroke="#f0a238" stroke-width="1"/>
<path d="M162.5,530.3399999999999 L164.00,529.3399999999999 L165.50,530.54 L167.00,529.3399999999999 L168.50,530.54 L170.00,529.3399999999999 L171.50,530.54 L173.00,529.3399999999999 L174.50,530.54 L176.00,529.3399999999999 L176.50,530.54" fill="none" stroke="#f0a238" stroke-width="1"/>
<path d="M162.5,545.88 L164.00,544.88 L165.50,546.08 L167.00,544.88 L168.50,546.08 L170.00,544.88 L171.50,546.08 L173.00,544.88 L174.50,546.08 L176.00,544.88 L176.50,546.08" fill="none" stroke="#f0a238" stroke-width="1"/>
<!-- playback -->
<defs>
<radialGradient id="pb" cx="0.45" cy="0.4" r="0.62"><stop offset="0" stop-color="#ffffff"/><stop offset="0.6" stop-color="#eeeeee"/><stop offset="0.85" stop-color="#b4b4b4"/><stop offset="1" stop-color="#7c7c7c"/></radialGradient>
<linearGradient id="trk" x1="0" y1="0" x2="0" y2="1"><stop offset="0" stop-color="#8a96a6"/><stop offset="0.25" stop-color="#f2f2f2"/><stop offset="0.75" stop-color="#e2e2e2"/><stop offset="1" stop-color="#9aa4b2"/></linearGradient>
</defs>
<circle cx="858.7" cy="553.6" r="7" fill="url(#pb)"/>
<path d="M856.6,550 L861.9,553.5 L856.6,557 Z" fill="#1a1a1a"/>
<rect x="875" y="551" width="7" height="4.8" fill="url(#trk)" stroke="#9aa4b2" stroke-width="0.6"/>
<rect x="883" y="551" width="271" height="4.8" fill="url(#trk)"/>
<path d="M1153.3,547.5 L1167.5,547.5 L1167.5,555.5 L1160.4,560 L1153.3,555.5 Z" fill="#f6f6f6" stroke="#a0a0a0" stroke-width="0.9"/>
<line x1="1157" y1="550" x2="1164" y2="550" stroke="#c8c8c8" stroke-width="0.8"/>
<rect x="1177.8" y="544.8" width="40.4" height="18" rx="3" fill="#f2f2f2" stroke="#c4c4c4" stroke-width="0.9"/>
<text x="1180.5" y="558" font-family="Liberation Sans" font-size="10.5" fill="#444" textLength="19" lengthAdjust="spacingAndGlyphs">1.0x</text>
<path d="M1206.5,553 L1212.5,553 L1209.5,556.2 Z" fill="#000"/>
<rect x="1227.3" y="544.8" width="18.6" height="18" rx="3" fill="#f5f5f5" stroke="#c4c4c4" stroke-width="0.9"/>
<rect x="1230.2" y="547" width="11.5" height="10.7" fill="#3c3c3c"/>
<rect x="1231.4" y="549.6" width="9.1" height="5.6" fill="#dcdcdc"/>
<rect x="1231.6" y="547.8" width="1.2" height="1" fill="#fff"/><rect x="1233.8" y="547.8" width="1.2" height="1" fill="#fff"/><rect x="1236" y="547.8" width="1.2" height="1" fill="#fff"/><rect x="1238.2" y="547.8" width="1.2" height="1" fill="#fff"/><rect x="1240.2" y="547.8" width="1" height="1" fill="#fff"/>
<rect x="1231.6" y="556" width="1.2" height="1" fill="#fff"/><rect x="1233.8" y="556" width="1.2" height="1" fill="#fff"/><rect x="1236" y="556" width="1.2" height="1" fill="#fff"/>
<path d="M1234.8,550.2 L1238.2,552.4 L1234.8,554.6 Z" fill="#222"/>
<path d="M1236.3,556.3 L1240.2,556.3 L1240.2,554.6 L1243.8,557.5 L1240.2,560.4 L1240.2,558.7 L1236.3,558.7 Z" fill="#3f9f3f" stroke="#9ad09a" stroke-width="0.6"/>
</svg>
<div class="vh" style="left:816px;top:582.5px">a = <span>3×1</span></div>
<div class="vn" style="left:850.5px;top:598.1px">0.3604</div>
<div class="vn" style="left:850.5px;top:610.5px">0.8979</div>
<div class="vn" style="left:850.5px;top:622.9px">0.1885</div>
<div class="vh" style="left:816px;top:649.5px">w = <span>3×1</span></div>
<div class="vn" style="left:856.2px;top:664px">0</div>
<div class="vn" style="left:856.2px;top:676.4px">0</div>
<div class="vn" style="left:856.2px;top:688.8px">0</div>
<div class="vh" style="left:816px;top:715.5px">A = <span>3×1</span></div>
</body></html>
